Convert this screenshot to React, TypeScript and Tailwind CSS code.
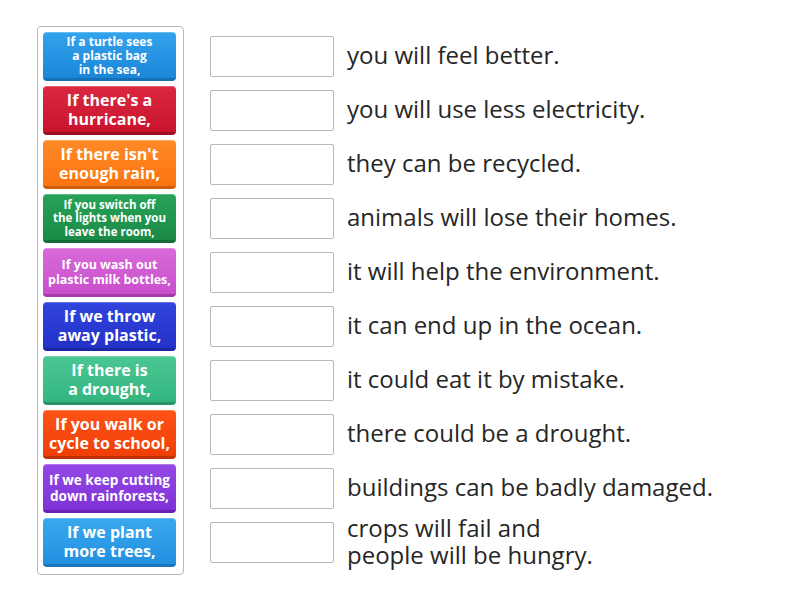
import React from 'react';

interface Tile {
  text: string[];
  size: string;
  bg: string;
}

const tiles: Tile[] = [
  { text: ['If a turtle sees', 'a plastic bag', 'in the sea,'], size: 'text-[12px] leading-[14px]', bg: 'bg-gradient-to-b from-[#34a3ee] to-[#1a86d8] border-[#1570b8]' },
  { text: ["If there's a", 'hurricane,'], size: 'text-[16px] leading-[19px]', bg: 'bg-gradient-to-b from-[#dc2740] to-[#c8142c] border-[#9c0e20]' },
  { text: ["If there isn't", 'enough rain,'], size: 'text-[16px] leading-[19px]', bg: 'bg-gradient-to-b from-[#ff8a26] to-[#fb7410] border-[#d05c06]' },
  { text: ['If you switch off', 'the lights when you', 'leave the room,'], size: 'text-[11.5px] leading-[13.5px]', bg: 'bg-gradient-to-b from-[#27a358] to-[#1b8a47] border-[#146c37]' },
  { text: ['If you wash out', 'plastic milk bottles,'], size: 'text-[12.5px] leading-[15px]', bg: 'bg-gradient-to-b from-[#d86ad9] to-[#c94fcc] border-[#a63aa9]' },
  { text: ['If we throw', 'away plastic,'], size: 'text-[16px] leading-[19px]', bg: 'bg-gradient-to-b from-[#3144dc] to-[#2332c8] border-[#1a27a0]' },
  { text: ['If there is', 'a drought,'], size: 'text-[16px] leading-[19px]', bg: 'bg-gradient-to-b from-[#4ac793] to-[#33b57f] border-[#289468]' },
  { text: ['If you walk or', 'cycle to school,'], size: 'text-[16px] leading-[19px]', bg: 'bg-gradient-to-b from-[#ff5317] to-[#f03f06] border-[#c23104]' },
  { text: ['If we keep cutting', 'down rainforests,'], size: 'text-[13.5px] leading-[16px]', bg: 'bg-gradient-to-b from-[#9448e6] to-[#7e32d6] border-[#6424b0]' },
  { text: ['If we plant', 'more trees,'], size: 'text-[16px] leading-[19px]', bg: 'bg-gradient-to-b from-[#38a8ee] to-[#2390e0] border-[#1a74bc]' },
];

const answers: string[][] = [
  ['you will feel better.'],
  ['you will use less electricity.'],
  ['they can be recycled.'],
  ['animals will lose their homes.'],
  ['it will help the environment.'],
  ['it can end up in the ocean.'],
  ['it could eat it by mistake.'],
  ['there could be a drought.'],
  ['buildings can be badly damaged.'],
  ['crops will fail and', 'people will be hungry.'],
];

const App: React.FC = () => {
  return (
    <div className="w-[800px] h-[600px] bg-white flex font-['Open_Sans',sans-serif]">
      <div className="ml-[37px] mt-[26px] w-[147px] h-[549px] border border-[#b8b8b8] rounded-[4px] px-[5px] pt-[5px] flex flex-col gap-[5px]">
        {tiles.map((t, i) => (
          <div
            key={i}
            className={`h-[49px] w-[133px] pt-[2px] rounded-[4px] border-b-[3px] ${t.bg} flex flex-col items-center justify-center text-white font-bold text-center ${t.size} shadow-[inset_0_1px_0_rgba(255,255,255,0.25)]`}
          >
            {t.text.map((l, j) => (
              <span key={j}>{l}</span>
            ))}
          </div>
        ))}
      </div>
      <div className="ml-[26px] mt-[36px] flex flex-col gap-[13px]">
        {answers.map((a, i) => (
          <div key={i} className="h-[41px] flex items-center">
            <div className="w-[124px] h-[41px] border border-[#b8b8b8] rounded-[2px] bg-white shrink-0" />
            <div className="ml-[13px] -mt-[4px] text-[24px] leading-[27px] text-[#262626] whitespace-nowrap">
              {a.map((l, j) => (
                <div key={j}>{l}</div>
              ))}
            </div>
          </div>
        ))}
      </div>
    </div>
  );
};

export default App;
